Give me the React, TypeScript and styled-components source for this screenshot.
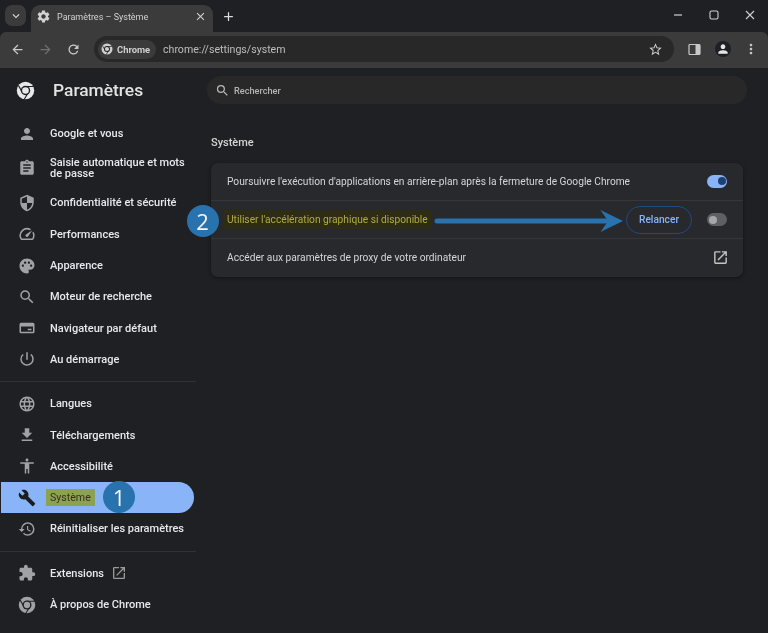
import React from "react";
import styled, { createGlobalStyle } from "styled-components";
import {
  MdAccessibility, MdAdd, MdArrowBack, MdArrowForward, MdAssignment, MdBuild, MdClose, MdExtension,
  MdFileDownload, MdKeyboardArrowDown, MdLanguage, MdMoreVert, MdOpenInNew, MdPalette, MdPerson,
  MdPowerSettingsNew, MdRefresh, MdRestore, MdSearch, MdSecurity, MdSettings, MdSpeed, MdStarBorder,
} from "react-icons/md";

const Global = createGlobalStyle`
  html, body { margin: 0; padding: 0; background: #1f2023; }
  body { font-family: Roboto, "Noto Sans", sans-serif; overflow: hidden; }
`;

const Page = styled.div`
  position: relative; width: 768px; height: 633px; overflow: hidden; background: #1f2023; color: #e3e3e3;
  filter: blur(0.35px);
`;
const TabStrip = styled.div`
  height: 32px; display: flex; align-items: flex-end; padding-left: 5px; background: #1f2023;
`;
const TabSearch = styled.div`
  width: 21px; height: 21px; margin: 0 5px 6px 0; border-radius: 7px; background: #3b3b3b;
  display: flex; align-items: center; justify-content: center; color: #dcdcdc; font-size: 14px;
`;
const Tab = styled.div`
  width: 182px; height: 27px; box-sizing: border-box; padding: 0 6.5px 4px 4.5px; border-radius: 9px 9px 0 0; background: #3b3b3b;
  display: flex; align-items: center; color: #d2d2d2; font-size: 9px;
  svg:first-child { font-size: 15px; margin-right: 6.5px; flex: none; }
  span { flex: 1; white-space: nowrap; }
  svg:last-child { font-size: 13px; flex: none; }
`;
const NewTab = styled.div`
  width: 30px; height: 27px; display: flex; align-items: center; justify-content: center;
  color: #dcdcdc; font-size: 15px; padding-bottom: 5px; box-sizing: border-box;
`;
const WindowControls = styled.div`
  margin-left: auto; align-self: flex-start; display: flex; height: 30px; align-items: center; color: #d0d0d0;
`;
const WindowButton = styled.div`
  width: 36px; height: 30px; display: flex; align-items: center; justify-content: center;
`;
const Toolbar = styled.div`
  height: 36px; background: #3b3b3b; border-radius: 6px 6px 0 0; display: flex; align-items: center;
  box-sizing: border-box; padding: 0 0 2px 3px;
`;
const NavButton = styled.div<{ $dim?: boolean }>`
  width: 28px; height: 28px; display: flex; align-items: center; justify-content: center; font-size: 15px;
  color: ${(p) => (p.$dim ? "#6f6f6f" : "#c8c8c8")};
`;
const Omnibox = styled.div`
  margin-left: 7px; width: 580px; height: 26px; border-radius: 13px; background: #282828; flex: none;
  display: flex; align-items: center; box-sizing: border-box; padding: 0 11.5px 0 4px; color: #c4c4c4;
`;
const OriginChip = styled.div`
  width: 58px; height: 19px; box-sizing: border-box; border-radius: 10px; padding-left: 3px; background: #3b3b3b; display: flex; align-items: center; gap: 4px;
  font-size: 9.4px; font-weight: 700; color: #d0d0d0; margin-right: 7px;
`;
const Url = styled.span`
  font-size: 10.6px; flex: 1; color: #bdbdbd;
`;
const ToolIcons = styled.div`
  flex: 1; display: flex; align-items: center; color: #c8c8c8; padding-left: 14px;
`;
const SidePanelIcon = styled.svg`
  flex: none;
`;
const Avatar = styled.div`
  width: 16px; height: 16px; border-radius: 50%; background: #1f2023; color: #e6e6e6; display: flex;
  align-items: center; justify-content: center; font-size: 14px; margin: 0 12px 0 14px;
`;
const Header = styled.div`
  height: 44px; display: flex; align-items: center;
`;
const Brand = styled.div`
  width: 207px; display: flex; align-items: center; padding-left: 16px; box-sizing: border-box; gap: 18px;
  font-size: 17.4px; font-weight: 500; color: #e3e3e3;
`;
const SearchBox = styled.div`
  width: 540px; height: 28px; border-radius: 14px; background: #282828; display: flex; align-items: center;
  padding-left: 8px; box-sizing: border-box; gap: 4px; font-size: 9.2px; font-weight: 500; color: #b5b5b5;
  svg { font-size: 15px; color: #b5b5b5; }
`;
const Body = styled.div`
  display: grid; grid-template-columns: 211px 532px; padding-top: 6.35px;
`;
const SideNav = styled.nav`
  width: 196px; display: flex; flex-direction: column;
`;
const Item = styled.div<{ $active?: boolean; $tall?: boolean }>`
  height: ${(p) => (p.$tall ? "37.7px" : "31.3px")}; box-sizing: border-box; flex: none;
  width: ${(p) => (p.$active ? "193px" : "194px")}; margin-left: ${(p) => (p.$active ? "1px" : "0")};
  padding: 0 4px 0 ${(p) => (p.$active ? "17px" : "18px")};
  display: flex; align-items: center; gap: 14px; font-size: 11px; line-height: 11px; font-weight: 500;
  color: ${(p) => (p.$active ? "#3a3a20" : "#e6e9ed")};
  background: ${(p) => (p.$active ? "#8ab4f8" : "transparent")};
  border-radius: ${(p) => (p.$active ? "0 16px 16px 0" : "0")};
  svg { font-size: 18px; flex: none; color: ${(p) => (p.$active ? "#1d1d1d" : "#a0a2a6")}; }
`;
const MarkedLabel = styled.span`
  background: #8ba253; padding: 3px 4px; margin-left: -4px; font-weight: 400; font-size: 10.6px; color: #3b2e20;
`;
const ExternalHint = styled.span`
  display: flex; margin-left: -7px;
  svg { font-size: 16px; color: #9a9a9a; }
`;
const Rule = styled.div`
  height: 1px; background: #303134; margin: 6px 0;
`;
const SectionTitle = styled.div`
  font-size: 11px; font-weight: 500; color: #d5d5d5; padding: 16.4px 0 12.2px 0; line-height: 16px;
`;
const Card = styled.div`
  background: #28292c; border-radius: 7px; box-shadow: 0 1px 4px rgba(0,0,0,.45); width: 532px;
`;
const Row = styled.div<{ $first?: boolean }>`
  height: ${(p) => (p.$first ? "37px" : "38.3px")}; box-sizing: border-box; display: flex; align-items: center;
  padding: 0 16px; font-size: 10.2px; color: #d4d6d9;
  border-top: ${(p) => (p.$first ? "none" : "1px solid #36373a")};
`;
const RowText = styled.span`
  flex: 1; white-space: nowrap;
`;
const MarkedText = styled.span`
  display: inline-block; background: #2f2c15; color: #b0ac45; padding: 4px 3px; margin-left: -3px; line-height: 11px;
`;
const Toggle = styled.div<{ $on?: boolean }>`
  width: 20px; height: 13px; border-radius: 7px; background: ${(p) => (p.$on ? "#8ab4f8" : "#5f6064")};
  display: flex; align-items: center; justify-content: ${(p) => (p.$on ? "flex-end" : "flex-start")}; padding: 0 1.5px; box-sizing: border-box;
  &::after { content: ""; width: 8px; height: 8px; border-radius: 50%; background: ${(p) => (p.$on ? "#1d3f73" : "#a5a7aa")}; }
`;
const RestartButton = styled.div`
  width: 66px; height: 28px; box-sizing: border-box; border: 1px solid #1f4a80; border-radius: 14px; color: #8ab4f8;
  font-size: 10.2px; font-weight: 500; display: flex; align-items: center; justify-content: center; margin-right: 15px;
`;
const LinkIcon = styled.div`
  display: flex; font-size: 17px; color: #c4c4c4; margin-right: -2px;
`;
const Badge = styled.div<{ $x: number; $y: number }>`
  position: absolute; left: ${(p) => p.$x - 16}px; top: ${(p) => p.$y - 16}px; width: 32px; height: 32px; border-radius: 50%;
  background: #2872ae; color: #f4f4f4; font-family: "Open Sans", sans-serif; font-size: 22px; display: flex; align-items: center; justify-content: center;
`;
const ArrowMark = styled.svg`
  position: absolute; left: 430px; top: 206px;
`;

const ChromeLogo = ({ size, ring, core }: { size: number; ring: string; core: string }) => (
  <svg width={size} height={size} viewBox="0 0 24 24" style={{ flex: "none" }}>
    <circle cx="12" cy="12" r="11" fill={ring} />
    <path d="M12 7h10M8 14.3 3 5.5M15.5 14.6 10.5 23" stroke="#1f2023" strokeWidth="1.4" fill="none" />
    <circle cx="12" cy="12" r="6" fill="#1f2023" />
    <circle cx="12" cy="12" r="4.2" fill={core} />
  </svg>
);

const BrowserIcon = () => (
  <svg viewBox="0 0 24 24" width="1em" height="1em">
    <path fill="currentColor" fillRule="evenodd" d="M4 5h16a2 2 0 0 1 2 2v10a2 2 0 0 1-2 2H4a2 2 0 0 1-2-2V7a2 2 0 0 1 2-2Zm0 5v7h16v-7H4Z" />
    <rect x="13" y="13" width="5" height="2" fill="currentColor" />
  </svg>
);

const nav1: [React.ElementType, string, boolean?][] = [
  [MdPerson, "Google et vous"],
  [MdAssignment, "Saisie automatique et mots de passe", true],
  [MdSecurity, "Confidentialité et sécurité"],
  [MdSpeed, "Performances"],
  [MdPalette, "Apparence"],
  [MdSearch, "Moteur de recherche"],
  [BrowserIcon, "Navigateur par défaut"],
  [MdPowerSettingsNew, "Au démarrage"],
];

export default function App() {
  return (
    <Page>
      <Global />
      <TabStrip>
        <TabSearch><MdKeyboardArrowDown /></TabSearch>
        <Tab>
          <MdSettings />
          <span>Paramètres – Système</span>
          <MdClose />
        </Tab>
        <NewTab><MdAdd /></NewTab>
        <WindowControls>
          <WindowButton>
            <svg width="10" height="10" viewBox="0 0 10 10"><path d="M1 5h8" stroke="currentColor" strokeWidth="1.2" /></svg>
          </WindowButton>
          <WindowButton>
            <svg width="10" height="10" viewBox="0 0 10 10"><rect x="1" y="1" width="8" height="8" rx="1.5" fill="none" stroke="currentColor" strokeWidth="1.1" /></svg>
          </WindowButton>
          <WindowButton>
            <svg width="10" height="10" viewBox="0 0 10 10"><path d="M1 1l8 8M9 1l-8 8" stroke="currentColor" strokeWidth="1.1" /></svg>
          </WindowButton>
        </WindowControls>
      </TabStrip>
      <Toolbar>
        <NavButton><MdArrowBack /></NavButton>
        <NavButton $dim><MdArrowForward /></NavButton>
        <NavButton><MdRefresh /></NavButton>
        <Omnibox>
          <OriginChip><ChromeLogo size={12} ring="#cfcfcf" core="#cfcfcf" />Chrome</OriginChip>
          <Url>chrome://settings/system</Url>
          <MdStarBorder size={15} color="#cfcfcf" />
        </Omnibox>
        <ToolIcons>
          <SidePanelIcon width="13" height="13" viewBox="0 0 13 13">
            <rect x="1" y="1.5" width="11" height="10" rx="1" fill="none" stroke="#c8c8c8" strokeWidth="1.2" />
            <rect x="7.5" y="1.5" width="4.5" height="10" fill="#c8c8c8" />
          </SidePanelIcon>
          <Avatar><MdPerson /></Avatar>
          <MdMoreVert size={16} />
        </ToolIcons>
      </Toolbar>
      <Header>
        <Brand><ChromeLogo size={19} ring="#e8e8e8" core="#e8e8e8" />Paramètres</Brand>
        <SearchBox><MdSearch />Rechercher</SearchBox>
      </Header>
      <Body>
        <SideNav>
          {nav1.map(([Icon, label, tall]) => (
            <Item key={label} $tall={tall}><Icon />{label}</Item>
          ))}
          <Rule />
          <Item><MdLanguage />Langues</Item>
          <Item><MdFileDownload />Téléchargements</Item>
          <Item><MdAccessibility />Accessibilité</Item>
          <Item $active><MdBuild /><MarkedLabel>Système</MarkedLabel></Item>
          <Item><MdRestore />Réinitialiser les paramètres</Item>
          <Rule />
          <Item><MdExtension />Extensions<ExternalHint><MdOpenInNew /></ExternalHint></Item>
          <Item><ChromeLogo size={18} ring="#a0a2a6" core="#a0a2a6" />À propos de Chrome</Item>
        </SideNav>
        <main>
          <SectionTitle>Système</SectionTitle>
          <Card>
            <Row $first>
              <RowText>Poursuivre l'exécution d'applications en arrière-plan après la fermeture de Google Chrome</RowText>
              <Toggle $on />
            </Row>
            <Row>
              <RowText><MarkedText>Utiliser l'accélération graphique si disponible</MarkedText></RowText>
              <RestartButton>Relancer</RestartButton>
              <Toggle />
            </Row>
            <Row>
              <RowText>Accéder aux paramètres de proxy de votre ordinateur</RowText>
              <LinkIcon><MdOpenInNew /></LinkIcon>
            </Row>
          </Card>
        </main>
      </Body>
      <Badge $x={119} $y={497}>1</Badge>
      <Badge $x={202.5} $y={221}>2</Badge>
      <ArrowMark width="196" height="30" viewBox="0 0 196 30">
        <path d="M7 15H176" stroke="#2872ae" strokeWidth="5" strokeLinecap="round" />
        <path d="M170.5 4 L193 15 L170.5 26 L178 15 Z" fill="#2872ae" />
      </ArrowMark>
    </Page>
  );
}
